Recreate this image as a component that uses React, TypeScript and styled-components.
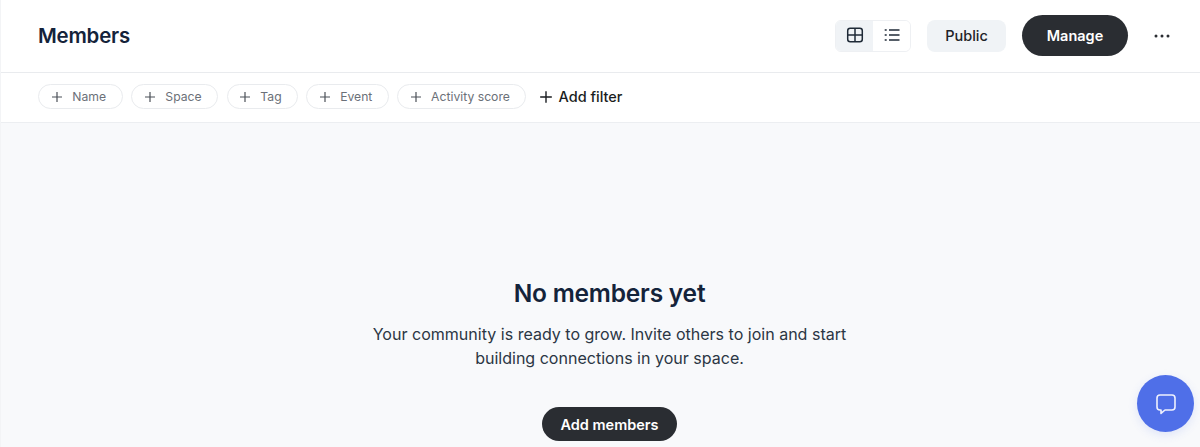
import React from "react";
import styled, { createGlobalStyle } from "styled-components";

const GlobalStyle = createGlobalStyle`
  html, body {
    margin: 0;
    padding: 0;
    height: 100%;
    overflow: hidden;
    font-family: Inter, "Liberation Sans", sans-serif;
  }
  #root { height: 100%; }
`;

const Page = styled.div`
  position: relative;
  height: 447px;
  display: flex;
  flex-direction: column;
  background: #f8f9fb;
  border-left: 1px solid #f3f4f6;
  box-sizing: border-box;
  overflow: hidden;
`;

const Header = styled.header`
  height: 73px;
  box-sizing: border-box;
  display: flex;
  align-items: center;
  padding: 0 28px 1px 37px;
  background: #fff;
  border-bottom: 1px solid #e9ebee;
`;

const Title = styled.h1`
  flex: 1;
  margin: 1px 0 0;
  font-size: 20.4px;
  line-height: 30px;
  font-weight: 600;
  letter-spacing: -0.2px;
  color: #14233a;
`;

const ViewToggle = styled.div`
  display: flex;
  width: 76px;
  height: 32px;
  box-sizing: border-box;
  border: 1px solid #eef0f3;
  border-radius: 6px;
  overflow: hidden;
  margin-right: 16px;
`;

const ViewButton = styled.div<{ $active?: boolean }>`
  flex: 1;
  display: flex;
  align-items: center;
  justify-content: center;
  padding-bottom: 2px;
  box-sizing: border-box;
  background: ${(p) => (p.$active ? "#f0f3f6" : "#fff")};
  color: #1f2a37;
`;

const PublicButton = styled.button`
  width: 79px;
  height: 32px;
  border: 0;
  border-radius: 8px;
  background: #f0f3f6;
  color: #1f2329;
  font: 500 14.5px Inter, sans-serif;
  margin-right: 16px;
  padding: 0;
`;

const ManageButton = styled.button`
  width: 106px;
  height: 41px;
  border: 0;
  border-radius: 21px;
  background: #2a2d32;
  color: #fff;
  font: 600 14.5px Inter, sans-serif;
  padding: 0;
  margin-right: 24px;
`;

const MoreButton = styled.div`
  display: flex;
  width: 20px;
  justify-content: center;
  color: #2a2d32;
`;

const FilterBar = styled.div`
  height: 50px;
  box-sizing: border-box;
  display: flex;
  align-items: center;
  gap: 8.5px;
  padding: 0 0 2px 37px;
  background: #fff;
  border-bottom: 1px solid #eceef1;
`;

const Chip = styled.div<{ $width: number }>`
  width: ${(p) => p.$width}px;
  height: 25px;
  box-sizing: border-box;
  display: flex;
  align-items: center;
  justify-content: center;
  gap: 9px;
  padding-right: 3px;
  border: 1px solid #e9ebee;
  border-radius: 13px;
  font-size: 12.2px;
  color: #6b7078;
  svg { color: #4b5058; flex-shrink: 0; }
`;

const AddFilter = styled.div`
  display: flex;
  align-items: center;
  gap: 6px;
  margin-left: 4px;
  font-size: 14.5px;
  font-weight: 450;
  color: #1a1d21;
`;

const Main = styled.main`
  flex: 1;
  display: flex;
  flex-direction: column;
  align-items: center;
  padding: 154px 0 0 18px;
`;

const EmptyTitle = styled.h2`
  margin: 0 0 13px;
  font-size: 24.5px;
  line-height: 32px;
  font-weight: 600;
  letter-spacing: -0.2px;
  color: #14233a;
`;

const EmptyText = styled.p`
  margin: 0 0 37px;
  width: 500px;
  text-align: center;
  font-size: 16.05px;
  line-height: 24px;
  color: #2b3644;
`;

const AddMembers = styled.button`
  width: 135px;
  height: 34px;
  flex-shrink: 0;
  border: 0;
  border-radius: 17px;
  background: #2a2d32;
  color: #fff;
  font: 600 14.5px Inter, sans-serif;
  padding: 0;
`;

const ChatBubble = styled.div`
  position: absolute;
  right: 6px;
  bottom: 15px;
  width: 57px;
  height: 57px;
  border-radius: 50%;
  background: #4f6fe8;
  display: flex;
  align-items: center;
  justify-content: center;
  box-shadow: 0 3px 10px rgba(79, 111, 232, 0.15);
`;

const PlusIcon = ({ size = 12 }: { size?: number }) => (
  <svg width={size} height={size} viewBox="0 0 12 12" fill="none" stroke="currentColor" strokeWidth="1.2">
    <path d="M6 1v10M1 6h10" />
  </svg>
);

const filters = [
  { label: "Name", width: 84.5 },
  { label: "Space", width: 87 },
  { label: "Tag", width: 71 },
  { label: "Event", width: 82.5 },
  { label: "Activity score", width: 129 },
];

const App: React.FC = () => {
  return (
    <Page>
      <GlobalStyle />
      <Header>
        <Title>Members</Title>
        <ViewToggle>
          <ViewButton $active>
            <svg width="18" height="16" viewBox="0 0 18 16" fill="none" stroke="currentColor" strokeWidth="1.5">
              <rect x="1.7" y="1.2" width="14.6" height="13.6" rx="2.5" />
              <path d="M9 1.2v13.6M1.7 8h14.6" />
            </svg>
          </ViewButton>
          <ViewButton>
            <svg width="16" height="14" viewBox="0 0 16 14" fill="none" stroke="currentColor" strokeWidth="1.3">
              <path d="M5 2h10.5M5 7h10.5M5 12h10.5" />
              <path d="M.7 2h2M.7 7h2M.7 12h2" strokeWidth="1.7" />
            </svg>
          </ViewButton>
        </ViewToggle>
        <PublicButton>Public</PublicButton>
        <ManageButton>Manage</ManageButton>
        <MoreButton>
          <svg width="16" height="4" viewBox="0 0 16 4" fill="currentColor">
            <circle cx="2" cy="2" r="1.5" />
            <circle cx="8" cy="2" r="1.5" />
            <circle cx="14" cy="2" r="1.5" />
          </svg>
        </MoreButton>
      </Header>
      <FilterBar>
        {filters.map((f) => (
          <Chip key={f.label} $width={f.width}>
            <PlusIcon />
            {f.label}
          </Chip>
        ))}
        <AddFilter>
          <PlusIcon size={14} />
          Add filter
        </AddFilter>
      </FilterBar>
      <Main>
        <EmptyTitle>No members yet</EmptyTitle>
        <EmptyText>
          Your community is ready to grow. Invite others to join and start building connections in your space.
        </EmptyText>
        <AddMembers>Add members</AddMembers>
      </Main>
      <ChatBubble>
        <svg width="24" height="24" viewBox="0 0 24 24" fill="none" stroke="#eef1fd" strokeWidth="1.6" strokeLinejoin="round">
          <path d="M6 3h12a3 3 0 0 1 3 3v9a3 3 0 0 1-3 3h-7l-4 3.4V18H6a3 3 0 0 1-3-3V6a3 3 0 0 1 3-3z" />
        </svg>
      </ChatBubble>
    </Page>
  );
};

export default App;
